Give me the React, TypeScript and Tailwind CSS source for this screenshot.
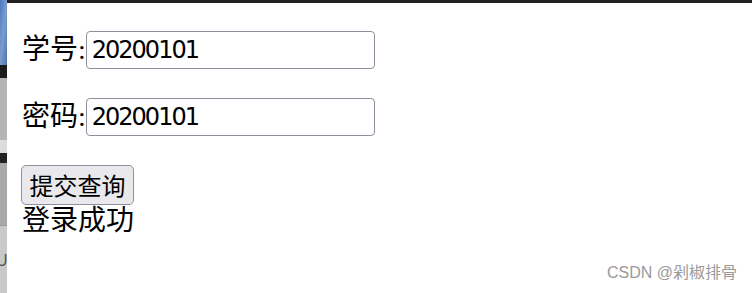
export default function App() {
  return (
    <div className="relative flex w-[752px] h-[293px] overflow-hidden bg-white">
      {/* sliver of the window behind */}
      <div className="flex flex-col w-[7px] shrink-0">
        <div className="h-[65px] bg-gradient-to-br from-[#4a78c0] via-[#7d9ccd] to-[#4c73b3]" />
        <div className="h-[13px] bg-[#1b1b1b]" />
        <div className="h-[62px] bg-[#b4b4b4]" />
        <div className="h-[13px] bg-[#dcdcdc]" />
        <div className="h-[10px] bg-[#222]" />
        <div className="h-[62px] bg-[#a9a9a9]" />
        <div className="flex-1 bg-[#c9c9c9] border-t border-[#9a9a9a] pt-[27px]">
          <span className="block text-[16px] leading-[16px] text-[#555] font-['Liberation_Sans',sans-serif] -ml-[4px]">
            U
          </span>
        </div>
      </div>

      <div className="flex flex-col flex-1">
        <div className="h-[3px] bg-[#202020]" />
        <div className="flex flex-col pl-[15px] pt-[28px] text-[28px] text-black font-['Liberation_Serif','Noto_Sans_CJK_SC',serif]">
          <div className="flex items-center h-[38px]">
            <span className="leading-none">学号:</span>
            <input
              readOnly
              value="20200101"
              className="w-[289px] h-[38px] px-[5px] border border-[#8f8f9d] rounded-[4px] bg-white text-[24px] text-black outline-none font-['DejaVu_Sans',sans-serif] tracking-[-2px]"
            />
          </div>
          <div className="flex items-center h-[38px] mt-[29px]">
            <span className="leading-none">密码:</span>
            <input
              readOnly
              value="20200101"
              className="w-[289px] h-[38px] px-[5px] border border-[#8f8f9d] rounded-[4px] bg-white text-[24px] text-black outline-none font-['DejaVu_Sans',sans-serif] tracking-[-2px]"
            />
          </div>
          <button className="mt-[29px] -ml-[1px] w-[113px] h-[40px] bg-[#e9e9ed] border border-[#8f8f9d] rounded-[5px] text-[24px] leading-none text-black font-['Noto_Sans_CJK_SC',sans-serif]">
            提交查询
          </button>
          <div className="leading-[32px]">登录成功</div>
        </div>
      </div>

      <div className="absolute right-[15px] bottom-[12px] text-[16px] leading-none text-[#9a9a9a] font-['Liberation_Sans','Noto_Sans_CJK_SC',sans-serif]">
        CSDN @剁椒排骨
      </div>
    </div>
  );
}
